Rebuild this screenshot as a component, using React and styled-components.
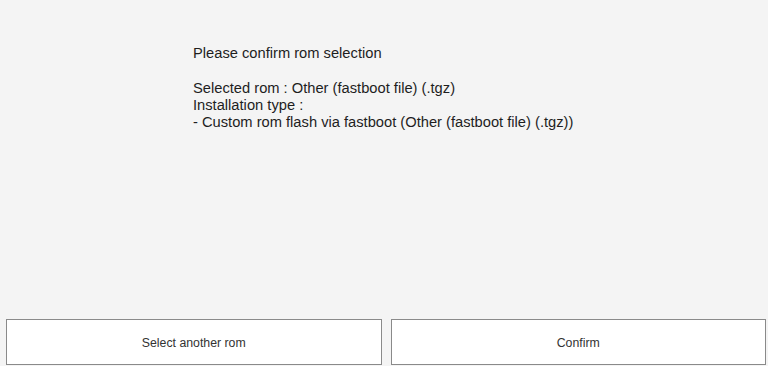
import React from 'react'
import styled, { createGlobalStyle } from 'styled-components'

const GlobalStyle = createGlobalStyle`
    html, body {
        margin: 0;
        padding: 0;
        background: #f4f4f4;
    }
    body {
        font-family: "Liberation Sans", Arial, sans-serif;
    }
`;

const Page = styled.div`
    width: 768px;
    height: 366px;
    display: flex;
    flex-direction: column;
    box-sizing: border-box;
    padding: 0 2px 1px 6px;
`;

const Message = styled.div`
    flex: 1;
    padding: 45px 0 0 187px;
    font-size: 14.7px;
    line-height: 17px;
    color: #1e1e1e;
    & > p {
        margin: 0;
    }
    & > p:first-of-type {
        margin-bottom: 18px;
    }
`;

const Actions = styled.div`
    display: flex;
    gap: 9px;
    height: 46px;
`;

const ActionButton = styled.button`
    flex: 1;
    background: #ffffff;
    border: 1px solid #8a8a8a;
    font-family: "Liberation Sans", Arial, sans-serif;
    font-size: 12.3px;
    color: #333;
    padding: 2px 0 0;
    cursor: pointer;
`;

const App = () => {
    return (
        <>
            <GlobalStyle />
            <Page>
                <Message>
                    <p>Please confirm rom selection</p>
                    <p>Selected rom : Other (fastboot file) (.tgz)</p>
                    <p>Installation type :</p>
                    <p>- Custom rom flash via fastboot (Other (fastboot file) (.tgz))</p>
                </Message>
                <Actions>
                    <ActionButton type="button">Select another rom</ActionButton>
                    <ActionButton type="button">Confirm</ActionButton>
                </Actions>
            </Page>
        </>
    )
}

export default App;
